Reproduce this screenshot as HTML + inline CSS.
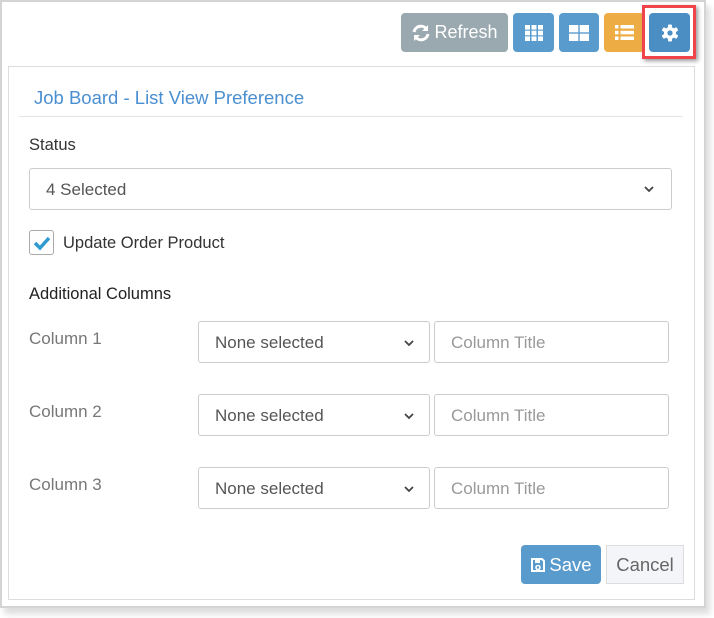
<!DOCTYPE html>
<html><head><style>
body{margin:0;width:714px;height:618px;background:#fff;font-family:"Liberation Sans",sans-serif;position:relative;overflow:hidden}
.a{position:absolute;box-sizing:border-box}
.btn{border-radius:4px;color:#fff;display:flex;align-items:center;justify-content:center}
.sel{border:1px solid #ccc;border-radius:3px;color:#555;font-size:17px;padding-left:16px;display:flex;align-items:center;padding-top:2px}
.lbl{color:#777;font-size:17px}
</style></head><body>
<div class="a" style="left:0;top:0;width:706px;height:608px;border:2px solid #d4d4d4;box-shadow:4px 6px 6px #ddd"></div>
<div class="a btn" style="left:401px;top:13px;width:107px;height:39px;background:#9aa9b0;font-size:18px">
<svg width="20" height="20" viewBox="0 0 20 20" style="margin-right:3px"><path d="M15.5 6A7 7 0 0 0 3 9" stroke="#fff" stroke-width="3" fill="none"/><path d="M17 2v6h-6z" fill="#fff"/><path d="M4.5 14A7 7 0 0 0 17 11" stroke="#fff" stroke-width="3" fill="none"/><path d="M3 18v-6h6z" fill="#fff"/></svg>Refresh</div>
<div class="a btn" style="left:513px;top:13px;width:41px;height:39px;background:#5a9bcd">
<svg width="18" height="16"><g fill="#fff"><rect x="0" y="0" width="5" height="4.6"/><rect x="6.5" y="0" width="5" height="4.6"/><rect x="13" y="0" width="5" height="4.6"/><rect x="0" y="5.7" width="5" height="4.6"/><rect x="6.5" y="5.7" width="5" height="4.6"/><rect x="13" y="5.7" width="5" height="4.6"/><rect x="0" y="11.4" width="5" height="4.6"/><rect x="6.5" y="11.4" width="5" height="4.6"/><rect x="13" y="11.4" width="5" height="4.6"/></g></svg></div>
<div class="a btn" style="left:559px;top:13px;width:40px;height:39px;background:#5a9bcd">
<svg width="20" height="16"><g fill="#fff"><rect x="0" y="0" width="9.3" height="7.3"/><rect x="10.7" y="0" width="9.3" height="7.3"/><rect x="0" y="8.7" width="9.3" height="7.3"/><rect x="10.7" y="8.7" width="9.3" height="7.3"/></g></svg></div>
<div class="a btn" style="left:604px;top:13px;width:41px;height:39px;background:#eeac45">
<svg width="19" height="15"><g fill="#fff"><rect x="0" y="0" width="3.5" height="3.5"/><rect x="5.5" y="0" width="13.5" height="3.5"/><rect x="0" y="5.8" width="3.5" height="3.5"/><rect x="5.5" y="5.8" width="13.5" height="3.5"/><rect x="0" y="11.5" width="3.5" height="3.5"/><rect x="5.5" y="11.5" width="13.5" height="3.5"/></g></svg></div>
<div class="a" style="left:642px;top:5px;width:54px;height:54px;border:3px solid #f0434a;box-shadow:2px 2px 4px #999;background:#fff"></div>
<div class="a btn" style="left:649px;top:13px;width:41px;height:39px;background:#4a8ec4">
<svg width="18" height="18" viewBox="0 0 18 18"><g fill="#fff" transform="translate(9 9)"><rect x="-2" y="-8.5" width="4" height="17" rx="1"/><rect x="-2" y="-8.5" width="4" height="17" rx="1" transform="rotate(60)"/><rect x="-2" y="-8.5" width="4" height="17" rx="1" transform="rotate(120)"/><circle r="6"/></g><circle cx="9" cy="9" r="2.6" fill="#4a8ec4"/></svg></div>
<div class="a" style="left:8px;top:66px;width:687px;height:534px;border:1px solid #ddd"></div>
<div class="a" style="left:34px;top:87px;color:#4a8fd0;font-size:18.5px">Job Board - List View Preference</div>
<div class="a" style="left:19px;top:116px;width:664px;height:1px;background:#e3e3e3"></div>
<div class="a" style="left:29px;top:136px;color:#333;font-size:16.5px">Status</div>
<div class="a sel" style="left:29px;top:168px;width:643px;height:42px">4 Selected</div>
<svg class="a" style="left:643px;top:184px" width="12" height="10"><path d="M2 3l4 4 4-4" stroke="#444" stroke-width="1.8" fill="none"/></svg>
<div class="a" style="left:29px;top:230px;width:25px;height:25px;border:1px solid #aaa;border-radius:3px"></div>
<svg class="a" style="left:33px;top:235px" width="18" height="16"><path d="M2 8l5 5 9-10" stroke="#2f9bd0" stroke-width="3.5" fill="none"/></svg>
<div class="a" style="left:63px;top:234px;color:#333;font-size:16.5px">Update Order Product</div>
<div class="a" style="left:29px;top:285px;color:#222;font-size:16.5px">Additional Columns</div>
<div class="a lbl" style="left:29px;top:329px">Column 1</div>
<div class="a lbl" style="left:29px;top:402px">Column 2</div>
<div class="a lbl" style="left:29px;top:475px">Column 3</div>
<div class="a sel" style="left:198px;top:321px;width:232px;height:42px">None selected</div>
<div class="a sel" style="left:198px;top:394px;width:232px;height:42px">None selected</div>
<div class="a sel" style="left:198px;top:467px;width:232px;height:42px">None selected</div>
<svg class="a" style="left:403px;top:338px" width="12" height="10"><path d="M2 3l4 4 4-4" stroke="#444" stroke-width="1.8" fill="none"/></svg>
<svg class="a" style="left:403px;top:411px" width="12" height="10"><path d="M2 3l4 4 4-4" stroke="#444" stroke-width="1.8" fill="none"/></svg>
<svg class="a" style="left:403px;top:484px" width="12" height="10"><path d="M2 3l4 4 4-4" stroke="#444" stroke-width="1.8" fill="none"/></svg>
<div class="a sel" style="left:434px;top:321px;width:235px;height:42px;color:#999">Column Title</div>
<div class="a sel" style="left:434px;top:394px;width:235px;height:42px;color:#999">Column Title</div>
<div class="a sel" style="left:434px;top:467px;width:235px;height:42px;color:#999">Column Title</div>
<div class="a btn" style="left:521px;top:545px;width:80px;height:39px;background:#5a9bcd;font-size:18.5px">
<svg width="16" height="16" viewBox="0 0 16 16" style="margin-right:3px"><path d="M2 2h10l2 2v10H2z" stroke="#fff" stroke-width="2" fill="none"/><rect x="5" y="3" width="5" height="3" fill="#fff"/><circle cx="8" cy="10.5" r="2" stroke="#fff" stroke-width="1.6" fill="none"/></svg>Save</div>
<div class="a" style="left:606px;top:545px;width:78px;height:39px;background:#f4f5f8;border:1px solid #ddd;color:#666;font-size:18.5px;display:flex;align-items:center;justify-content:center">Cancel</div>
</body></html>
